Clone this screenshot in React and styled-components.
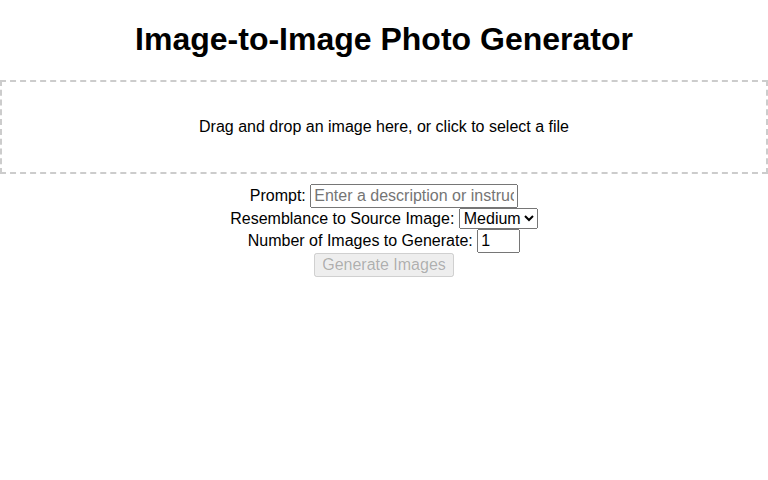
import React from "react";
import styled, { createGlobalStyle } from "styled-components";

const Global = createGlobalStyle`
  html, body { margin: 0; padding: 0; background: #fff; }
  body { font-family: "Liberation Sans", Arial, sans-serif; color: #000; }
`;

const Page = styled.div`
  text-align: center;
`;

const Title = styled.h1`
  font-size: 32px;
  font-weight: bold;
  margin: 21.44px 0;
`;

const DropZone = styled.div`
  border: 2px dashed #ccc;
  padding: 20px;
  cursor: pointer;
  font-size: 16px;
  p { margin: 16px 0; }
`;

const Form = styled.form`
  margin-top: 10px;
  font-size: 16px;
`;

const Row = styled.div``;

const Field = styled.input`
  font-family: inherit;
  font-size: 16px;
  box-sizing: border-box;
  width: ${(p) => p.$w}px;
`;

const Select = styled.select`
  font-family: inherit;
  font-size: 16px;
`;

const Button = styled.button`
  font-family: inherit;
  font-size: 16px;
`;

export default function App() {
  return (
    <Page>
      <Global />
      <Title>Image-to-Image Photo Generator</Title>
      <DropZone>
        <p>Drag and drop an image here, or click to select a file</p>
      </DropZone>
      <Form onSubmit={(e) => e.preventDefault()}>
        <Row>
          <label>Prompt: </label>
          <Field $w={208} type="text" placeholder="Enter a description or instructions" />
        </Row>
        <Row>
          <label>Resemblance to Source Image: </label>
          <Select defaultValue="medium">
            <option value="low">Low</option>
            <option value="medium">Medium</option>
            <option value="high">High</option>
          </Select>
        </Row>
        <Row>
          <label>Number of Images to Generate: </label>
          <Field $w={43} type="number" defaultValue={1} min={1} />
        </Row>
        <Button type="submit" disabled>Generate Images</Button>
      </Form>
    </Page>
  );
}
